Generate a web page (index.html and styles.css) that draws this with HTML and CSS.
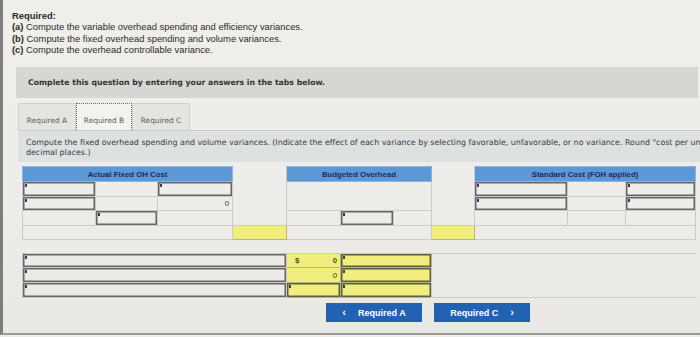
FILE: index.html
```html
<!DOCTYPE html>
<html>
<head>
<meta charset="utf-8">
<link rel="stylesheet" href="styles.css">
</head>
<body>
<div class="page">
  <div class="req">
    <div class="req-title">Required:</div>
    <div><b>(a)</b> Compute the variable overhead spending and efficiency variances.</div>
    <div><b>(b)</b> Compute the fixed overhead spending and volume variances.</div>
    <div><b>(c)</b> Compute the overhead controllable variance.</div>
  </div>

  <div class="band">Complete this question by entering your answers in the tabs below.</div>

  <div class="tabs">
    <div class="tab">Required A</div>
    <div class="tab active">Required B</div>
    <div class="tab">Required C</div>
  </div>

  <div class="panel">
    <div class="instr">
      <div class="nowrap">Compute the fixed overhead spending and volume variances. (Indicate the effect of each variance by selecting favorable, unfavorable, or no variance. Round "cost per unit" to 2</div>
      <div>decimal places.)</div>
    </div>

    <table class="grid">
      <colgroup>
        <col class="w73"><col class="w62"><col class="w75"><col class="w54">
        <col class="w54"><col class="w53"><col class="w38"><col class="w43">
        <col class="w93"><col class="w58"><col class="w70">
      </colgroup>
      <tr class="h15">
        <th colspan="3">Actual Fixed OH Cost</th>
        <td rowspan="4" class="gap"></td>
        <th colspan="3">Budgeted Overhead</th>
        <td rowspan="4" class="gap"></td>
        <th colspan="3">Standard Cost (FOH applied)</th>
      </tr>
      <tr class="h15">
        <td class="in"></td><td></td><td class="in"></td>
        <td colspan="3" rowspan="2"></td>
        <td class="in"></td><td></td><td class="in"></td>
      </tr>
      <tr class="h14">
        <td class="in"></td><td></td><td class="num">0</td>
        <td class="in"></td><td></td><td class="in"></td>
      </tr>
      <tr class="h15">
        <td></td><td class="in"></td><td></td>
        <td></td><td class="in"></td><td></td>
        <td></td><td></td><td></td>
      </tr>
      <tr class="h14">
        <td colspan="3"></td>
        <td class="yel"></td>
        <td colspan="3"></td>
        <td class="yel"></td>
        <td colspan="3"></td>
      </tr>
      <tr class="h14">
        <td colspan="11" class="blank"></td>
      </tr>
      <tr class="h14">
        <td colspan="4" class="in"></td>
        <td class="yel"><div class="split"><span>$</span><span>0</span></div></td>
        <td colspan="2" class="in yel"></td>
        <td colspan="4" rowspan="3" class="open"></td>
      </tr>
      <tr class="h15">
        <td colspan="4" class="in"></td>
        <td class="yel num">0</td>
        <td colspan="2" class="in yel"></td>
      </tr>
      <tr class="h15">
        <td colspan="4" class="in"></td>
        <td class="in yel"></td>
        <td colspan="2" class="in yel"></td>
      </tr>
    </table>

    <div class="nav">
      <div class="btn"><span class="chev">&lsaquo;</span>Required A</div>
      <div class="btn">Required C<span class="chev after">&rsaquo;</span></div>
    </div>
  </div>
</div>
</body>
</html>
```

FILE: styles.css
```css
html, body {
  margin: 0;
  padding: 0;
  overflow: hidden;
}
body {
  width: 700px;
  height: 337px;
  background: #eeede9;
}
.page {
  box-sizing: border-box;
  height: 335px;
  border-left: 3px solid #7d7d7b;
  border-bottom: 2px solid #9a9a97;
  background: linear-gradient(180deg, #efeeea 0%, #eeede9 60%, #e9e8e4 100%);
  padding-top: 10px;
  overflow: hidden;
}
.req {
  padding-left: 9px;
  font-family: "Liberation Sans", Arial, sans-serif;
  font-size: 9.4px;
  line-height: 11.3px;
  color: #2b2b2b;
}
.req b, .req-title {
  font-weight: 700;
}
.band {
  margin: 12px 2px 0 13px;
  height: 31px;
  background: #d6d6d2;
  display: flex;
  align-items: center;
  padding-left: 12px;
  font-family: "DejaVu Sans", Verdana, sans-serif;
  font-weight: 700;
  font-size: 7.75px;
  color: #333;
}
.tabs {
  display: flex;
  margin: 5px 0 0 15px;
  height: 27px;
}
.tab {
  box-sizing: border-box;
  width: 58px;
  padding-top: 12px;
  text-align: center;
  font-family: "DejaVu Sans", Verdana, sans-serif;
  font-size: 7.4px;
  color: #5a5a5a;
  background: #e4e4e1;
  border: 1px solid #cfcfcc;
  border-bottom: none;
}
.tab.active {
  width: 56px;
  background: #f2f2ef;
  border: 1px dotted #666;
  border-bottom: none;
}
.panel {
  margin-left: 15px;
  border-top: 1px solid #c9ccce;
}
.instr {
  background: #dde1e2;
  height: 31px;
  box-sizing: border-box;
  padding: 7px 0 0 8px;
  font-family: "DejaVu Sans", Verdana, sans-serif;
  font-size: 7.9px;
  line-height: 9.5px;
  color: #3a3a3a;
}
.nowrap {
  white-space: nowrap;
}
.grid {
  margin: 4px 0 0 4px;
  border-collapse: collapse;
  table-layout: fixed;
  width: 673px;
  font-family: "Liberation Sans", Arial, sans-serif;
}
.w73 { width: 73px; }
.w62 { width: 62px; }
.w75 { width: 75px; }
.w54 { width: 54px; }
.w53 { width: 53px; }
.w38 { width: 38px; }
.w43 { width: 43px; }
.w93 { width: 93px; }
.w58 { width: 58px; }
.w70 { width: 70px; }
.h15 { height: 15px; }
.h14 { height: 14px; }
.grid th {
  padding: 0;
  background: #5c98d6;
  color: #1b2d5c;
  font-weight: 700;
  font-size: 7.8px;
  border: 1px solid #8fb3da;
}
.grid td {
  padding: 0;
  border: 1px solid #cbcbc7;
  font-size: 7.8px;
  color: #333;
}
.grid td.gap {
  border-top: none;
}
.grid td.in {
  box-shadow: inset 0 0 0 1.5px #666;
  background: linear-gradient(#3a3a55, #3a3a55) 2px 2px / 2px 3px no-repeat;
}
.grid td.yel {
  background-color: #f2ee7d;
  border-color: #b9b67a;
}
.grid td.in.yel {
  background: linear-gradient(#3a3a55, #3a3a55) 2px 2px / 2px 3px no-repeat, #f2ee7d;
  box-shadow: inset 0 0 0 1.5px #5e5e40;
}
.grid td.num {
  text-align: right;
  padding-right: 3px;
}
.grid td.blank {
  border-left: none;
  border-right: none;
}
.grid td.open {
  border-right: none;
}
.split {
  display: flex;
  justify-content: space-between;
  padding: 0 3px 0 8px;
  font-weight: 700;
  color: #4a4a2a;
}
.nav {
  display: flex;
  gap: 12px;
  margin-top: 5px;
  padding-left: 308px;
}
.btn {
  box-sizing: border-box;
  width: 96px;
  height: 19px;
  background: #2262b2;
  color: #fff;
  font-family: "Liberation Sans", Arial, sans-serif;
  font-weight: 700;
  font-size: 9px;
  display: flex;
  align-items: center;
  justify-content: center;
}
.chev {
  font-size: 11px;
  margin-right: 12px;
  line-height: 1;
}
.chev.after {
  margin-right: 0;
  margin-left: 12px;
}
```
